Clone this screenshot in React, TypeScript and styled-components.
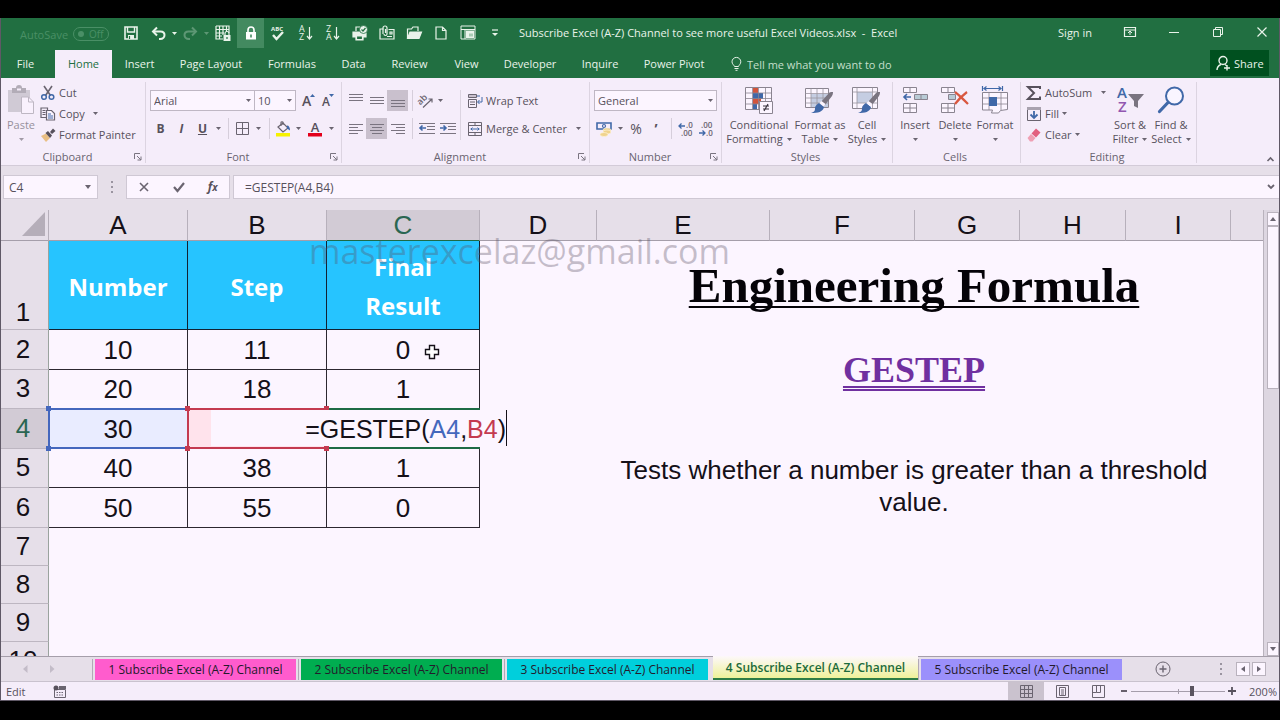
import React from "react";
import styled, { createGlobalStyle, css } from "styled-components";

const UI = `"Open Sans", "Noto Sans", sans-serif`;
const ARIAL = `"Liberation Sans", Arial, sans-serif`;
const SERIF = `"Liberation Serif", "Times New Roman", serif`;

const c = {
  green: "#216f41",
  greenDark: "#00501f",
  ribbon: "#f5edfa",
  chrome: "#e6dfe9",
  sheet: "#fcf5ff",
  line: "#b9b2bd",
  ink: "#57515c",
  blue: "#4068a8",
  cyan: "#26c4ff",
  refBlue: "#4467bd",
  refRed: "#c43a50",
};

const Global = createGlobalStyle`
  * { box-sizing: border-box; }
  body { margin: 0; background: #000; font-family: ${UI}; font-size: 11px; color: ${c.ink}; }
  button, input, select { font: inherit; color: inherit; margin: 0; padding: 0; border: 0; background: none; border-radius: 0; }
  svg { display: block; flex: none; overflow: visible; }
`;

const Page = styled.div`
  height: 100vh;
  padding: 18px 0 19px;
  background: #000;
`;
const Window = styled.div`
  height: 100%;
  display: flex;
  flex-direction: column;
  border: solid #5f5866;
  border-width: 0 1px 1px;
  background: ${c.chrome};
  overflow: hidden;
`;

/* ---------- title bar ---------- */
const TitleBar = styled.header`
  flex: none;
  height: 32px;
  display: flex;
  align-items: stretch;
  background: ${c.green};
  color: #e9f3ea;
`;
const AutoSave = styled.label`
  display: flex;
  align-items: center;
  gap: 5px;
  width: 116px;
  padding-left: 19px;
  white-space: nowrap;
  color: #4a8f66;
`;
const Toggle = styled.button`
  display: flex;
  align-items: center;
  gap: 5px;
  width: 36px;
  height: 14px;
  padding-left: 4px;
  border: 1px solid #4a8f66;
  border-radius: 7px;
  font-size: 10px;
  line-height: 12px;
  &::before {
    content: "";
    width: 6px;
    height: 6px;
    border-radius: 50%;
    background: #4a8f66;
  }
`;
const QuickButton = styled.button<{ $w?: number; $on?: boolean; $faded?: boolean }>`
  flex: none;
  width: ${(p) => p.$w ?? 27}px;
  height: 30px;
  display: flex;
  align-items: center;
  justify-content: center;
  background: ${(p) => (p.$on ? "#438a60" : "none")};
  opacity: ${(p) => (p.$faded ? 0.3 : 1)};
`;
const Title = styled.div`
  flex: 1;
  padding-left: 11px;
  line-height: 29px;
  white-space: nowrap;
`;
const WindowTools = styled.div`
  display: flex;
  align-items: center;
  gap: 32px;
  height: 28px;
  padding-right: 11px;
`;
const PlainButton = styled.button`
  display: flex;
  align-items: center;
  white-space: nowrap;
`;

/* ---------- ribbon tabs ---------- */
const TabBar = styled.nav`
  flex: none;
  height: 28px;
  display: flex;
  background: ${c.green};
  color: #e9f3ea;
`;
const RibbonTab = styled.button<{ $w: number; $active?: boolean }>`
  flex: none;
  width: ${(p) => p.$w}px;
  line-height: 28px;
  text-align: center;
  white-space: nowrap;
  ${(p) =>
    p.$active &&
    css`
      margin-left: 5px;
      background: ${c.ribbon};
      color: ${c.green};
    `}
`;
const TellMe = styled.label`
  flex: 1;
  display: flex;
  align-items: center;
  gap: 5px;
  padding-left: 15px;
  input { width: 160px; outline: 0; }
  input::placeholder { color: #c4dfcb; opacity: 1; }
`;
const Share = styled.button`
  display: flex;
  align-items: center;
  gap: 3px;
  width: 59px;
  height: 26px;
  margin-right: 10px;
  padding-left: 6px;
  background: ${c.greenDark};
`;

/* ---------- ribbon ---------- */
const Ribbon = styled.section`
  flex: none;
  display: flex;
  height: 88px;
  padding: 4px 0 2px;
  background: ${c.ribbon};
  border-bottom: 1px solid #d3cbd8;
`;
const Group = styled.div<{ $w: number }>`
  flex: none;
  width: ${(p) => p.$w}px;
  display: flex;
  flex-direction: column;
  border-right: 1px solid #dcd4e1;
`;
const GroupBody = styled.div<{ $pad?: number }>`
  display: flex;
  height: 69px;
  padding-left: ${(p) => p.$pad ?? 0}px;
`;
const GroupLabel = styled.div`
  display: flex;
  align-items: center;
  line-height: 12px;
  padding-right: 3px;
  color: #6a6470;
  span { flex: 1; text-align: center; }
`;
const Stack = styled.div<{ $w?: number }>`
  width: ${(p) => (p.$w ? p.$w + "px" : "auto")};
  display: flex;
  flex-direction: column;
`;
const SmallButton = styled.button`
  display: flex;
  align-items: center;
  gap: 3px;
  height: 21px;
  white-space: nowrap;
`;
const Split = styled.div`
  display: flex;
  align-items: center;
  gap: 6px;
`;
const Spread = styled.div`
  display: flex;
  align-items: center;
  justify-content: space-between;
`;
const Rows = styled.div`
  display: flex;
  flex-direction: column;
  gap: 7px;
  padding-top: 8px;
`;
const Row = styled.div`
  display: flex;
  align-items: center;
  height: 21px;
`;
const Tool = styled.button<{ $w?: number; $on?: boolean }>`
  flex: none;
  width: ${(p) => p.$w ?? 21}px;
  height: 21px;
  display: flex;
  align-items: center;
  justify-content: center;
  background: ${(p) => (p.$on ? "#c9c0cd" : "none")};
`;
const Glyph = styled.span<{ $bold?: boolean; $italic?: boolean; $under?: boolean; $size?: number }>`
  font-size: ${(p) => p.$size ?? 12}px;
  font-weight: ${(p) => (p.$bold ? 700 : 400)};
  font-style: ${(p) => (p.$italic ? "italic" : "normal")};
  text-decoration: ${(p) => (p.$under ? "underline" : "none")};
  line-height: 16px;
`;
const Sep = styled.i<{ $w: number }>`
  flex: none;
  width: ${(p) => p.$w}px;
  height: 21px;
  background: linear-gradient(#d6cedb, #d6cedb) center / 1px 100% no-repeat;
`;
const AlignLeft = styled(Rows)`
  width: 116px;
  margin-right: 6px;
  background: linear-gradient(#dcd4e1, #dcd4e1) right 8px / 1px 50px no-repeat;
`;
const AlignRight = styled(Rows)`
  flex: 1;
  padding-right: 5px;
`;
const Combo = styled.div<{ $w: number }>`
  position: relative;
  flex: none;
  width: ${(p) => p.$w}px;
  select {
    width: 100%;
    height: 21px;
    appearance: none;
    padding-left: 3px;
    border: 1px solid #bfb7c4;
    background: ${c.sheet};
    outline: 0;
  }
  & + & { margin-left: -1px; }
  svg { position: absolute; right: 4px; top: 9px; pointer-events: none; }
`;
const BigButton = styled.button<{ $w: number; $faded?: boolean }>`
  flex: none;
  width: ${(p) => p.$w}px;
  display: flex;
  flex-direction: column;
  align-items: center;
  padding-top: 4px;
  opacity: ${(p) => (p.$faded ? 0.6 : 1)};
`;
const BigIcon = styled.span`
  height: 32px;
`;
const BigLine = styled.span`
  display: flex;
  align-items: center;
  gap: 4px;
  height: 14px;
  line-height: 14px;
  white-space: nowrap;
`;
const RibbonEnd = styled.div`
  flex: 1;
  display: flex;
  align-items: flex-end;
  justify-content: flex-end;
  padding: 0 4px 0 0;
`;

/* ---------- formula bar ---------- */
const FormulaBar = styled.section`
  flex: none;
  display: flex;
  height: 44px;
  padding: 9px 0 11px 2px;
  font-size: 12px;
`;
const NameBox = styled.div`
  display: flex;
  align-items: center;
  width: 95px;
  padding: 0 6px 0 5px;
  border: 1px solid #cfc8d4;
  background: ${c.sheet};
  input { flex: 1; min-width: 0; outline: 0; }
`;
const Dots = styled.span<{ $w: number }>`
  width: ${(p) => p.$w}px;
  display: flex;
  align-items: center;
  justify-content: center;
`;
const FormulaButtons = styled.div`
  display: flex;
  align-items: center;
  justify-content: space-around;
  width: 104px;
  margin-right: 3px;
  border: 1px solid #cfc8d4;
  background: ${c.sheet};
`;
const FormulaField = styled.div`
  flex: 1;
  display: flex;
  align-items: center;
  padding: 0 4px 0 11px;
  border: 1px solid #cfc8d4;
  border-right: 0;
  background: ${c.sheet};
  input { flex: 1; min-width: 0; outline: 0; }
`;

/* ---------- sheet ---------- */
const Workspace = styled.main`
  position: relative;
  flex: 1;
  min-height: 0;
  display: flex;
`;
const GridClip = styled.div`
  flex: 1;
  min-width: 0;
  overflow: hidden;
  background: linear-gradient(${c.chrome} 31px, ${c.sheet} 31px);
  border-right: 1px solid ${c.line};
`;
const Grid = styled.table`
  width: 100%;
  table-layout: fixed;
  border-collapse: separate;
  border-spacing: 0;
  font-family: ${ARIAL};
  font-size: 26px;
  line-height: 30px;
  text-align: center;
  color: #151018;
`;
const SheetRow = styled.tr<{ $h: number }>`
  height: ${(p) => p.$h}px;
`;
const Blank = styled.td`
  padding: 0;
`;
const ColHead = styled.th<{ $on?: boolean }>`
  height: 31px;
  padding: 0;
  font-weight: 400;
  border-bottom: 1px solid ${(p) => (p.$on ? "#1d6b45" : "#a59eaa")};
  border-right: 1px solid #b7b0bb;
  background: ${(p) => (p.$on ? "#d2cbd5" : c.chrome)};
  color: ${(p) => (p.$on ? "#2a6652" : "inherit")};
  &:last-child { border-right: 0; }
`;
const Corner = styled(ColHead)`
  svg { margin: 0 3px 2px auto; }
`;
const RowHead = styled.th<{ $on?: boolean; $bottom?: boolean }>`
  padding: 0 3px 2px 0;
  font-weight: 400;
  border-right: 1px solid #9aa39e;
  border-bottom: 1px solid #bdb6c1;
  background: ${(p) => (p.$on ? "#d2cbd5" : c.chrome)};
  color: ${(p) => (p.$on ? "#2a6652" : "inherit")};
  vertical-align: ${(p) => (p.$bottom ? "bottom" : "middle")};
`;
const Head = styled.td`
  padding: 2px 0 0;
  border-right: 1px solid #123;
  border-bottom: 1px solid #123;
  background: ${c.cyan};
  color: #fff;
  font-family: ${UI};
  font-size: 24px;
  font-weight: 700;
  line-height: 39px;
`;
const Cell = styled.td`
  position: relative;
  padding: 0;
  border-right: 1px solid #2c2730;
  border-bottom: 1px solid #2c2730;
`;
const RefCell = styled(Cell)<{ $color: string; $tint: string }>`
  background: ${(p) => p.$tint};
  &::before {
    content: "";
    position: absolute;
    inset: -1px -2px -1px -1px;
    border: 2px solid ${(p) => p.$color};
    border-right: 0;
  }
`;
const ActiveCell = styled.td`
  position: relative;
  padding: 0;
  &::before {
    content: "";
    position: absolute;
    inset: -1px 0 0 0;
    border: solid #1d6b45;
    border-width: 2px 0;
  }
`;
const Handle = styled.i<{ $x: "left" | "right"; $y: "top" | "bottom"; $color: string }>`
  position: absolute;
  z-index: 2;
  width: 5px;
  height: 5px;
  background: ${(p) => p.$color};
  ${(p) => p.$x}: -3px;
  ${(p) => p.$y}: -3px;
`;
const Editor = styled.div`
  position: absolute;
  z-index: 3;
  right: -27px;
  top: 1px;
  width: 296px;
  height: 36px;
  line-height: 38px;
  font-size: 25px;
  text-align: right;
  white-space: nowrap;
  background: ${c.sheet};
  border-right: 1px solid #151018;
`;
const RefText = styled.span<{ $color: string }>`
  color: ${(p) => p.$color};
`;
const Pointer = styled.svg`
  position: absolute;
  left: 97px;
  top: 14px;
`;
const Heading = styled.h1`
  margin: 0;
  font: 700 49px/56px ${SERIF};
  color: #050308;
  text-decoration: underline 2px;
  text-underline-offset: 4px;
  text-decoration-skip-ink: none;
  white-space: nowrap;
`;
const SubHeading = styled.h2`
  margin: 0;
  font: 700 36px/40px ${SERIF};
  color: #7030a0;
  text-decoration: underline double 2px;
  text-underline-offset: 4px;
`;
const Description = styled.td`
  padding: 0 0 6px;
  line-height: 32px;
`;
const Watermark = styled.div`
  position: absolute;
  z-index: 4;
  left: 308px;
  top: 18px;
  font-size: 34px;
  line-height: 46px;
  color: rgba(90, 80, 100, 0.34);
  pointer-events: none;
`;

const VScroll = styled.div`
  flex: none;
  width: 15px;
  display: flex;
  flex-direction: column;
  padding: 2px 0 0 3px;
  background: #ddd6e1;
`;
const ScrollButton = styled.button`
  flex: none;
  width: 12px;
  height: 14px;
  display: flex;
  align-items: center;
  justify-content: center;
  border: 1px solid ${c.line};
  background: ${c.sheet};
`;
const VThumb = styled.div`
  flex: 0 0 163px;
  border: 1px solid ${c.line};
  background: ${c.sheet};
`;
const Fill = styled.div`
  flex: 1;
`;

/* ---------- sheet tabs and status ---------- */
const SheetBar = styled.nav`
  flex: none;
  display: flex;
  align-items: flex-start;
  height: 26px;
  border-top: 1px solid #a59eaa;
  border-bottom: 1px solid #c9c2ce;
`;
const SheetArrows = styled.div`
  display: flex;
  align-items: center;
  gap: 22px;
  width: 92px;
  height: 24px;
  padding-left: 22px;
`;
const SheetTab = styled.button<{ $bg: string; $active?: boolean }>`
  flex: none;
  width: 201px;
  height: 21px;
  margin: 2px 0 0 2px;
  box-shadow: -2px 0 0 ${c.chrome}, -3px 0 0 #b1a9b6;
  background: ${(p) => p.$bg};
  color: #241a2c;
  font-size: 12px;
  line-height: 20px;
  white-space: nowrap;
  & + & { margin-left: 5px; }
  ${(p) =>
    p.$active &&
    css`
      && { width: 205px; height: 24px; margin: -1px -2px 0 3px; }
      padding-top: 2px;
      border-bottom: 2px solid #2d7d46;
      box-shadow: none;
      color: #1d6b3c;
      font-weight: 600;
    `}
`;
const SheetEnd = styled.div`
  flex: 1;
  display: flex;
  align-items: center;
  height: 24px;
  margin-left: 3px;
  padding-right: 13px;
`;
const AddSheet = styled.button`
  width: 16px;
  height: 16px;
  margin-left: 30px;
  margin-right: auto;
`;
const HButton = styled(ScrollButton)`
  width: 14px;
  margin-left: 2px;
`;
const Status = styled.footer`
  flex: none;
  display: flex;
  align-items: center;
  height: 18px;
  padding-left: 5px;
  background: ${c.ribbon};
`;
const Mode = styled.span`
  width: 47px;
`;
const ViewButton = styled.button<{ $on?: boolean }>`
  width: 36px;
  height: 18px;
  display: flex;
  align-items: center;
  justify-content: center;
  background: ${(p) => (p.$on ? "#cac2ce" : "none")};
`;
const ZoomGroup = styled.div`
  display: flex;
  align-items: center;
  gap: 3px;
  margin-left: 5px;
`;
const Zoom = styled.input`
  width: 94px;
  height: 14px;
  appearance: none;
  background: linear-gradient(#a59dab, #a59dab) center / 100% 1px no-repeat,
    linear-gradient(#a59dab, #a59dab) 47px center / 1px 5px no-repeat;
  outline: 0;
  &::-webkit-slider-thumb {
    appearance: none;
    width: 4px;
    height: 10px;
    background: #5a5460;
  }
`;
const Percent = styled.span`
  width: 43px;
  padding-right: 2px;
  text-align: right;
`;

/* ---------- icons ---------- */
const Down = ({ color = "#6a6470" }: { color?: string }) => (
  <svg width="5" height="3" viewBox="0 0 5 3"><path d="M0 0h5L2.5 3z" fill={color} /></svg>
);
const Tri = ({ d }: { d: "up" | "down" | "left" | "right" }) => {
  const p = { up: "M0 5h6L3 1z", down: "M0 1h6L3 5z", left: "M5 0v6L1 3z", right: "M1 0v6l4-3z" }[d];
  return <svg width="6" height="6" viewBox="0 0 6 6"><path d={p} fill="#6a6470" /></svg>;
};
const W = (props: { children: React.ReactNode; w?: number; h?: number; s?: string }) => (
  <svg width={props.w ?? 16} height={props.h ?? 16} viewBox={`0 0 ${props.w ?? 16} ${props.h ?? 16}`} fill="none" stroke={props.s ?? "#e9f3ea"} strokeWidth="1.2">
    {props.children}
  </svg>
);
const Launcher = () => (
  <svg width="8" height="8" viewBox="0 0 8 8" fill="none" stroke="#7a7480"><path d="M.5 6V.5H6M3 3l4 4M7 3.5V7H3.5" /></svg>
);
const Save = () => (
  <W w={14} h={14}><path d="M1 1h12v12H1z" strokeWidth="1.6" /><path d="M3.5 1v5h7V1" strokeWidth="1.4" /><path d="M4 9h6v4H4z" fill="#e9f3ea" stroke="none" /><path d="M5.5 10v3" stroke={c.green} /></W>
);
const Undo = ({ flip }: { flip?: boolean }) => (
  <W w={15} h={13}><g transform={flip ? "translate(15 0) scale(-1 1)" : undefined}><path d="M2 4.5h7.5c2.5 0 4 1.5 4 3.500s-1.5 4-4.5 4H8" strokeWidth="2" /><path d="M6 .5L2 4.5l4 4" strokeWidth="2" /></g></W>
);
const GridLock = () => (
  <W><path d="M1 1h13v7M1 1v13h7M1 4.5h13M1 8h8M1 11h6M4.5 1v13M8 1v9M11.5 1v6" /><path d="M8.5 10h7v6h-7z" fill="#e9f3ea" stroke="none" /><path d="M10 10V8.500a2 2 0 014 0V10" /><path d="M12 12v2" stroke={c.green} /></W>
);
const Lock = () => (
  <W w={12} h={14}><path d="M1 6h10v7.5H1z" fill="#fff" stroke="none" /><path d="M3 6V4a3 3 0 016 0v2" stroke="#fff" strokeWidth="1.6" /><path d="M6 8.5v3" stroke="#438a60" strokeWidth="1.6" /></W>
);
const Spelling = () => (
  <W><text x="1" y="6" fontSize="6" fontWeight="700" fontFamily="Open Sans" fill="#e9f3ea" stroke="none">ABC</text><path d="M3 10l3.500 4L13 7" strokeWidth="2.4" /></W>
);
const SortIcon = ({ a, b }: { a: string; b: string }) => (
  <W><g fontSize="9" fontFamily="Open Sans" fill="#e9f3ea" stroke="none"><text x="1" y="7">{a}</text><text x="1" y="15">{b}</text></g><path d="M11.500 2v11M9 11l2.500 3 2.500-3" /></W>
);
const Printer = () => (
  <W><path d="M1 7h13v5H1z" fill="#e9f3ea" /><path d="M4 6V2h4M4 11v4h7v-4" /><path d="M4.5 11h6v3.500h-6z" fill={c.green} /><circle cx="11.5" cy="4.5" r="4" fill="#e9f3ea" stroke={c.green} strokeWidth=".8" /><path d="M9.5 4.500l1.500 1.500 2.500-3" stroke={c.green} /></W>
);
const Clip = () => (
  <W><path d="M4.500 4H1v10h14V4.500H9.500" /><path d="M4 9V3a2 2 0 014 0v6a1.500 1.500 0 01-3 0M6.500 4v4" /><path d="M11 7h2v2h-2zM8 11.500h5" /></W>
);
const Folder = () => (
  <W><path d="M1.5 13V4h4L7 2h5v4" /><path d="M1.5 13.500L4 7h11.500L13 13.500z" fill="#e9f3ea" /></W>
);
const NewFile = () => (
  <W w={12} h={14}><path d="M1 1h6.500L11 4.500V13H1zM7.500 1v3.500H11" /></W>
);
const Camera = () => (
  <W><path d="M1 1h14v13H1zM1 4.500h14M5 4.500V14" strokeWidth="1" /><path d="M6.500 6h7v6.500h-7z" fill="#e9f3ea" /><path d="M9 8.500h4v3H9z" fill="#a8cbb3" stroke="none" /></W>
);
const Customize = () => (
  <W w={6} h={8}><path d="M0 1h6" /><path d="M0 4h6L3 7z" fill="#e9f3ea" stroke="none" /></W>
);
const RibbonDisplay = () => (
  <W w={12} h={10}><path d="M.5.5h11v9H.5zM.5 3h11" /><path d="M6 8V4.500M4 6l2-2 2 2" strokeWidth="1" /></W>
);
const Minimize = () => <W w={12} h={10}><path d="M1 5.500h10" strokeWidth="1" /></W>;
const Restore = () => <W w={12} h={10}><path d="M1.5 2.500h7v7h-7zM3.500 2.500v-2h7v7h-2" strokeWidth="1" /></W>;
const Close = () => <W w={12} h={10}><path d="M1.500.500l9 9M10.500.500l-9 9" strokeWidth="1.200" /></W>;
const Bulb = () => (
  <W w={11} h={14}><path d="M3.500 9.500C3 8 1 7 1 4.800a4.400 4.400 0 018.800 0C9.800 7 8 8 7.500 9.500zM3.500 11.500h4M4.500 13.300h2" strokeWidth="1" /></W>
);
const Person = () => (
  <W w={15} h={16}><circle cx="7" cy="5.500" r="4" strokeWidth="1.400" /><path d="M1 15c0-3 1.500-4.500 4-5.500M9 9.500l2 1.500M11 10v5.500M8 13h6" strokeWidth="1.400" /></W>
);

const G = "#6a6470";
const Paste = () => (
  <svg width="28" height="28" viewBox="0 0 28 28"><path d="M1 4h22v22H1z" fill="#b9b3bd" /><path d="M5 2h4a3 3 0 016 0h4v5H5z" fill="#87818c" /><path d="M10 2.500h4v2h-4z" fill="#f5edfa" /><path d="M14.500 11h7l5 5v11.500h-12z" fill="#fcf5ff" stroke="#9a94a0" /><path d="M21.500 11v5h5" fill="none" stroke="#9a94a0" /></svg>
);
const Cut = () => (
  <W s={G}><path d="M4 1l6.500 9.500M12 1L5.500 10.500" strokeWidth="1.600" /><circle cx="4" cy="12" r="2.300" stroke={c.blue} strokeWidth="1.500" /><circle cx="11.500" cy="12" r="2.300" stroke={c.blue} strokeWidth="1.500" /></W>
);
const Copy = () => (
  <W s={G}><path d="M1 2h6.500v9.500H1zM2.500 4.500h3M2.500 6.500h3M2.500 8.500h3" /><path d="M6.500 4.500h5l3 3v6.500h-8z" fill={c.sheet} /><path d="M8 8h3M8 10h5M8 12h5" stroke={c.blue} /></W>
);
const Painter = () => (
  <W s="none"><path d="M1 9l5-2.500 4 4.500-4 4z" fill="#e9bf84" /><path d="M5.500 6L8 4l4 4.500L10 11z" fill="#57515c" /><path d="M10 5l3-3.500 2.500 2.500-3.500 3z" fill="#57515c" /></W>
);
const Borders = () => <W w={13} h={13} s={G}><path d="M.5.5h12v12H.5zM6.500.5v12M.5 6.500h12" strokeWidth="1" /></W>;
const Bucket = () => (
  <W s={G}><path d="M3 6l5-4 5 5-5 4z" /><path d="M6 5V1.500c0-1 2-1 2 0V4" /><path d="M12 4.500c2 0 3 2 3 5-1-1-2-1-3-2z" fill={c.blue} stroke="none" /><path d="M1 12h14v3.500H1z" fill="#f6f100" stroke="none" /></W>
);
const FontColor = () => (
  <W w={16} s="none"><text x="8" y="11" textAnchor="middle" fontSize="13" fontWeight="600" fontFamily="Open Sans" fill={c.ink}>A</text><path d="M1 12h14v3.500H1z" fill="#e3001b" /></W>
);
const GrowA = ({ up }: { up: boolean }) => (
  <W w={14} s="none"><text x="0" y="13" fontSize={up ? 14 : 12} fontWeight="600" fontFamily="Open Sans" fill={c.ink}>A</text><path d={up ? "M8 4h5l-2.500-3z" : "M7 1h5L9.500 4z"} fill={c.blue} /></W>
);
const Lines = ({ ys, xs }: { ys: number[]; xs: [number, number][] }) => (
  <W w={14} s="#7a7480">{ys.map((y, i) => <path key={y} d={`M${xs[i % xs.length][0]} ${y}.5H${xs[i % xs.length][1]}`} strokeWidth="1" />)}</W>
);
const Orientation = () => (
  <W s={G}><text x="0" y="11" fontSize="9" fontWeight="600" fontFamily="Open Sans" fill={G} stroke="none" transform="rotate(-45 3 9)">ab</text><path d="M5 14.500L14 6M10.500 6H14v3.500" /></W>
);
const Indent = ({ right }: { right?: boolean }) => (
  <W s="#7a7480"><path d="M0 2.500h16M8 5.500h8M8 8.500h8M0 12.500h16" strokeWidth="1" /><path d={right ? "M0 7h6M3.500 4.500L6 7 3.500 9.500" : "M1 7h6M3.500 4.500L1 7l2.500 2.500"} stroke={c.blue} strokeWidth="1.600" /></W>
);
const Wrap = () => (
  <W s={G}><path d="M1.500 1.500h8v3h-8z" fill="#c9c0cd" strokeWidth="1" /><path d="M1.500 6.500h8v8h-8zM3 9h5M3 11.500h5" strokeWidth="1" /><path d="M10 3h3M15 4v5h-4M12.500 7l-2 2 2 2" stroke={c.blue} strokeWidth="1" /></W>
);
const Merge = () => (
  <W s={G}><path d="M1.500 1.500h13v13h-13zM1.500 4.500h13M1.500 11.500h13M8 1.500v3M8 11.500v3" strokeWidth="1" /><path d="M3.500 8h9M5.500 6.500L4 8l1.500 1.500M10.500 6.500L12 8l-1.500 1.500" stroke={c.blue} strokeWidth="1" /></W>
);
const Currency = () => (
  <W s={c.blue}><path d="M1 2h14v6H1z" strokeWidth="1.600" /><circle cx="8" cy="5" r="1.500" /><g fill="#f0d38d" stroke="#fff7e2" strokeWidth=".6"><ellipse cx="11" cy="9" rx="4" ry="2" /><ellipse cx="11" cy="11" rx="4" ry="2" /><ellipse cx="8" cy="13.500" rx="4" ry="2" /></g></W>
);
const Decimal = ({ add }: { add?: boolean }) => (
  <W s="none"><g fontSize="8" fontFamily="Open Sans" fontWeight="600" fill={G}><text x={add ? 8 : 3} y="7">{add ? ".0" : ".00"}</text><text x={add ? 3 : 8} y="15">{add ? ".00" : ".0"}</text></g><path d={add ? "M1 5h6M3.500 2.500L1 5l2.500 2.500" : "M1 12h6M4.500 9.500L7 12l-2.500 2.500"} stroke={c.blue} strokeWidth="1.300" /></W>
);
const Conditional = () => (
  <svg width="30" height="28" viewBox="0 0 30 28"><path d="M1.500 1.500h26v22h-26z" fill="#fcf5ff" stroke="#8a8490" /><path d="M9 2h5v5H9zM9 13h8v5H9z" fill="#d2543c" /><path d="M9 7h10v6H9zM9 18h4v5H9z" fill={c.blue} /><path d="M1.500 7h26M1.500 12.500h26M1.500 18h26M8.500 1.500v22M14.500 1.500v22M21.500 1.500v22" stroke="#8a8490" fill="none" strokeWidth=".8" /><path d="M15.500 15.500h13v12h-13z" fill="#fcf5ff" stroke="#8a8490" /><path d="M19 20h6M19 23h6M24 18l-4 7" stroke="#38323c" strokeWidth="1.200" /></svg>
);
const Brush = ({ x }: { x: number }) => (
  <g transform={`translate(${x} 0)`}><path d="M20 7l-8 9 4 3 7-9c1-1.500 1-4 1-4s-3-.5-4 1z" fill="#7a7480" /><path d="M10 17l5 4c-1 5-6 6-13 6 4-1 4-3 4-5s2-4 4-5z" fill={c.blue} /><path d="M10.500 17l2-2 4 3-2 2.500z" fill="#fcf5ff" /></g>
);
const FormatTable = () => (
  <svg width="32" height="28" viewBox="0 0 32 28"><path d="M1.500 2.500h23v19h-23z" fill="#fcf5ff" stroke="#8a8490" /><path d="M7 8h17v13H7z" fill="#c5cde2" /><path d="M1.500 7.500h23M1.500 12h23M1.500 17h23M7 2.500v19M13 2.500v19M19 2.500v19" stroke="#9a94a0" strokeWidth=".8" /><Brush x={5} /></svg>
);
const CellStyles = () => (
  <svg width="32" height="28" viewBox="0 0 32 28"><path d="M1.500 1.500h25v21h-25z" fill="#fcf5ff" stroke="#8a8490" /><path d="M6 6h15v11H6z" fill="#c5cde2" /><path d="M1.500 6h25M1.500 17h25M6 1.500v21M21.500 1.500v21" stroke="#9a94a0" strokeWidth=".8" /><Brush x={5} /></svg>
);
const InsertCells = () => (
  <svg width="28" height="28" viewBox="0 0 28 28" fill="#fcf5ff" stroke="#8a8490"><path d="M2.500 1.500h13v5h-13zM9 1.500v5M2.500 17.500h13v9h-13zM9 17.500v9M2.500 22h13" /><path d="M13.500 8.500h13v5h-13zM20 8.500v5" fill="#b9cbd6" /><path d="M10 11H3M6 8l-3 3 3 3" fill="none" stroke={c.blue} strokeWidth="1.600" /></svg>
);
const DeleteCells = () => (
  <svg width="28" height="28" viewBox="0 0 28 28" fill="#fcf5ff" stroke="#8a8490"><path d="M.5 1.500h13v5H.5zM7 1.500v5M.5 17.500h13v9H.5zM7 17.500v9M.5 22h13" /><path d="M7.500 8.500h7v5h-7z" fill="#b9cbd6" /><path d="M14 6c4 3 9 8 13 12M26 6c-4 3-9 8-12 12" fill="none" stroke="#d9573f" strokeWidth="2.200" /></svg>
);
const FormatCells = () => (
  <svg width="28" height="28" viewBox="0 0 28 28" fill="#fcf5ff" stroke="#8a8490"><path d="M1.500 6.500h25v17l-7 1-2 2.500h-7l1-3h-10z" /><path d="M1.500 12h25M1.500 18h25M8 6.500V24M20 6.500V24" strokeWidth=".8" /><path d="M8 11h8v9H8z" fill={c.blue} stroke="none" /><path d="M1.500 0v5M21.500 0v5M3 2.500h17M5.500.5l-2.500 2 2.500 2M17.500.5l2.500 2-2.500 2" fill="none" stroke={c.blue} strokeWidth="1.200" /></svg>
);
const Sigma = () => <W s={c.ink}><path d="M14 4V2H2l6 6-6 6h12v-2.500" strokeWidth="2" /></W>;
const FillDown = () => <W s={G}><path d="M1.500 1.500h13v13h-13z" strokeWidth="1" /><path d="M1 1h14v3H1z" fill="#a9a2af" stroke="none" /><path d="M8 5v7M4.500 8.500L8 12l3.500-3.500" stroke={c.blue} strokeWidth="1.800" /></W>;
const Eraser = () => <W s="none"><path d="M1.500 11L5 7l4.500 4-3 3.500H4z" fill="#efa0b4" /><path d="M5.500 6.500L10 1.500l4.500 4-4.500 5z" fill="#e2607f" /></W>;
const SortFilter = () => (
  <svg width="30" height="28" viewBox="0 0 30 28"><g fontSize="15" fontWeight="600" fontFamily="Open Sans"><text x="2" y="12" fill={c.blue}>A</text><text x="3" y="26" fill="#9257b0">Z</text></g><path d="M13 8h16l-6 7v7l-4-2v-5z" fill="#7a7480" /></svg>
);
const Find = () => (
  <svg width="28" height="28" viewBox="0 0 28 28" fill="none"><circle cx="17.500" cy="10" r="8.500" fill="#f9f5ff" stroke={c.blue} strokeWidth="2" /><path d="M11 16.500L2.500 25.500" stroke={c.blue} strokeWidth="3.200" strokeLinecap="round" /></svg>
);
const DotColumn = () => <svg width="2" height="12" viewBox="0 0 2 12" fill="#9a94a0"><path d="M0 0h2v2H0zM0 5h2v2H0zM0 10h2v2H0z" /></svg>;

const ribbonTabs: [string, number][] = [
  ["File", 49], ["Home", 57], ["Insert", 55], ["Page Layout", 88], ["Formulas", 74], ["Data", 49],
  ["Review", 63], ["View", 51], ["Developer", 76], ["Inquire", 64], ["Power Pivot", 84],
];
const columns: [string, number | undefined][] = [
  ["A", 139], ["B", 139], ["C", 153], ["D", 117], ["E", 173], ["F", 145], ["G", 105], ["H", 106], ["I", 105], ["", undefined],
];
const sheets = [
  ["1", "#ff5ccd"], ["2", "#00ad50"], ["3", "#00cfdc"], ["4", "linear-gradient(#fdf8fb, #eef29a)"], ["5", "#9b90fb"],
];

const Big = ({ w, icon, a, b, faded }: { w: number; icon: React.ReactNode; a: string; b?: string; faded?: boolean }) => (
  <BigButton $w={w} $faded={faded}>
    <BigIcon>{icon}</BigIcon>
    <BigLine>{a}</BigLine>
    <BigLine>{b}<Down /></BigLine>
  </BigButton>
);

export default function App() {
  return (
    <Page>
      <Global />
      <Window>
        <TitleBar>
          <AutoSave>AutoSave<Toggle aria-label="AutoSave">Off</Toggle></AutoSave>
          <QuickButton $w={28} aria-label="Save"><Save /></QuickButton>
          <QuickButton $w={26} aria-label="Undo"><Undo /></QuickButton>
          <QuickButton $w={6} aria-label="Undo history"><Down color="#e9f3ea" /></QuickButton>
          <QuickButton $w={26} $faded aria-label="Redo"><Undo flip /></QuickButton>
          <QuickButton $w={6} $faded aria-label="Redo history"><Down color="#e9f3ea" /></QuickButton>
          <QuickButton $w={28} aria-label="Protect sheet"><GridLock /></QuickButton>
          <QuickButton $on aria-label="Lock cell"><Lock /></QuickButton>
          <QuickButton $w={28} aria-label="Spelling"><Spelling /></QuickButton>
          <QuickButton aria-label="Sort ascending"><SortIcon a="A" b="Z" /></QuickButton>
          <QuickButton aria-label="Sort descending"><SortIcon a="Z" b="A" /></QuickButton>
          <QuickButton aria-label="Print preview"><Printer /></QuickButton>
          <QuickButton aria-label="Email"><Clip /></QuickButton>
          <QuickButton aria-label="Open"><Folder /></QuickButton>
          <QuickButton aria-label="New"><NewFile /></QuickButton>
          <QuickButton $w={28} aria-label="Form"><Camera /></QuickButton>
          <QuickButton $w={26} aria-label="Customize toolbar"><Customize /></QuickButton>
          <Title>Subscribe Excel (A-Z) Channel to see more useful Excel Videos.xlsx&nbsp; -&nbsp; Excel</Title>
          <WindowTools>
            <PlainButton>Sign in</PlainButton>
            <PlainButton aria-label="Ribbon display options"><RibbonDisplay /></PlainButton>
            <PlainButton aria-label="Minimize"><Minimize /></PlainButton>
            <PlainButton aria-label="Restore"><Restore /></PlainButton>
            <PlainButton aria-label="Close"><Close /></PlainButton>
          </WindowTools>
        </TitleBar>

        <TabBar>
          {ribbonTabs.map(([name, w]) => (
            <RibbonTab key={name} $w={w} $active={name === "Home"}>{name}</RibbonTab>
          ))}
          <TellMe><Bulb /><input aria-label="Tell me" placeholder="Tell me what you want to do" /></TellMe>
          <Share><Person />Share</Share>
        </TabBar>

        <Ribbon>
          <Group $w={145}>
            <GroupBody $pad={1}>
              <Big w={38} icon={<Paste />} a="Paste" faded />
              <Stack $w={100}>
                <SmallButton><Cut />Cut</SmallButton>
                <Split>
                  <SmallButton><Copy />Copy</SmallButton>
                  <Tool $w={10} aria-label="Copy options"><Down /></Tool>
                </Split>
                <SmallButton><Painter />Format Painter</SmallButton>
              </Stack>
            </GroupBody>
            <GroupLabel><span>Clipboard</span><Launcher /></GroupLabel>
          </Group>

          <Group $w={196}>
            <GroupBody $pad={4}>
              <Rows>
                <Row>
                  <Combo $w={105}><select aria-label="Font"><option>Arial</option></select><Down /></Combo>
                  <Combo $w={42}><select aria-label="Font size"><option>10</option></select><Down /></Combo>
                  <Tool $w={26} aria-label="Increase font size"><GrowA up /></Tool>
                  <Tool $w={14} aria-label="Decrease font size"><GrowA up={false} /></Tool>
                </Row>
                <Row>
                  <Tool><Glyph $bold>B</Glyph></Tool>
                  <Tool><Glyph $bold $italic>I</Glyph></Tool>
                  <Tool><Glyph $bold $under>U</Glyph></Tool>
                  <Tool $w={10} aria-label="Underline style"><Down /></Tool>
                  <Sep $w={10} />
                  <Tool $w={18} aria-label="Borders"><Borders /></Tool>
                  <Tool $w={14} aria-label="Border style"><Down /></Tool>
                  <Sep $w={8} />
                  <Tool $w={20} aria-label="Fill color"><Bucket /></Tool>
                  <Tool $w={10} aria-label="Fill palette"><Down /></Tool>
                  <Tool $w={24} aria-label="Font color"><FontColor /></Tool>
                  <Tool $w={8} aria-label="Font palette"><Down /></Tool>
                </Row>
              </Rows>
            </GroupBody>
            <GroupLabel><span>Font</span><Launcher /></GroupLabel>
          </Group>

          <Group $w={248}>
            <GroupBody $pad={3}>
              <AlignLeft>
                <Row>
                  <Tool aria-label="Top align"><Lines ys={[1, 4, 7]} xs={[[0, 14]]} /></Tool>
                  <Tool aria-label="Middle align"><Lines ys={[4, 7, 10]} xs={[[0, 14]]} /></Tool>
                  <Tool $on aria-label="Bottom align"><Lines ys={[7, 10, 13]} xs={[[0, 14]]} /></Tool>
                  <Sep $w={8} />
                  <Tool $w={20} aria-label="Orientation"><Orientation /></Tool>
                  <Tool $w={9} aria-label="Orientation options"><Down /></Tool>
                </Row>
                <Row>
                  <Tool aria-label="Align left"><Lines ys={[3, 6, 9, 12]} xs={[[0, 14], [0, 9]]} /></Tool>
                  <Tool $on aria-label="Center"><Lines ys={[3, 6, 9, 12]} xs={[[0, 14], [2, 12]]} /></Tool>
                  <Tool aria-label="Align right"><Lines ys={[3, 6, 9, 12]} xs={[[0, 14], [5, 14]]} /></Tool>
                  <Sep $w={8} />
                  <Tool aria-label="Decrease indent"><Indent /></Tool>
                  <Tool aria-label="Increase indent"><Indent right /></Tool>
                </Row>
              </AlignLeft>
              <AlignRight>
                <SmallButton><Wrap />Wrap Text</SmallButton>
                <Spread>
                  <SmallButton><Merge />Merge &amp; Center</SmallButton>
                  <Tool $w={12} aria-label="Merge options"><Down /></Tool>
                </Spread>
              </AlignRight>
            </GroupBody>
            <GroupLabel><span>Alignment</span><Launcher /></GroupLabel>
          </Group>

          <Group $w={132}>
            <GroupBody $pad={4}>
              <Rows>
                <Row><Combo $w={123}><select aria-label="Number format"><option>General</option></select><Down /></Combo></Row>
                <Row>
                  <Tool $w={20} aria-label="Accounting format"><Currency /></Tool>
                  <Tool $w={12} aria-label="Currency options"><Down /></Tool>
                  <Tool $w={20}><Glyph $size={14}>%</Glyph></Tool>
                  <Tool $w={20}><Glyph $bold $size={14}>’</Glyph></Tool>
                  <Sep $w={10} />
                  <Tool $w={20} aria-label="Increase decimal"><Decimal add /></Tool>
                  <Tool $w={20} aria-label="Decrease decimal"><Decimal /></Tool>
                </Row>
              </Rows>
            </GroupBody>
            <GroupLabel><span>Number</span><Launcher /></GroupLabel>
          </Group>

          <Group $w={171}>
            <GroupBody>
              <Big w={74} icon={<Conditional />} a="Conditional" b="Formatting" />
              <Big w={48} icon={<FormatTable />} a="Format as" b="Table" />
              <Big w={46} icon={<CellStyles />} a="Cell" b="Styles" />
            </GroupBody>
            <GroupLabel><span>Styles</span></GroupLabel>
          </Group>

          <Group $w={128}>
            <GroupBody $pad={2}>
              <Big w={40} icon={<InsertCells />} a="Insert" />
              <Big w={40} icon={<DeleteCells />} a="Delete" />
              <Big w={40} icon={<FormatCells />} a="Format" />
            </GroupBody>
            <GroupLabel><span>Cells</span></GroupLabel>
          </Group>

          <Group $w={176}>
            <GroupBody $pad={5}>
              <Stack $w={83}>
                <Spread>
                  <SmallButton><Sigma />AutoSum</SmallButton>
                  <Tool $w={12} aria-label="AutoSum options"><Down /></Tool>
                </Spread>
                <SmallButton><FillDown />Fill<Down /></SmallButton>
                <SmallButton><Eraser />Clear<Down /></SmallButton>
              </Stack>
              <Big w={42} icon={<SortFilter />} a="Sort &" b="Filter" />
              <Big w={40} icon={<Find />} a="Find &" b="Select" />
            </GroupBody>
            <GroupLabel><span>Editing</span></GroupLabel>
          </Group>

          <RibbonEnd>
            <PlainButton aria-label="Collapse ribbon">
              <W w={9} h={8} s={G}><path d="M1.5 6l3-3 3 3" strokeWidth="1.600" /></W>
            </PlainButton>
          </RibbonEnd>
        </Ribbon>

        <FormulaBar>
          <NameBox><input aria-label="Name box" defaultValue="C4" /><Tri d="down" /></NameBox>
          <Dots $w={28}><DotColumn /></Dots>
          <FormulaButtons>
            <PlainButton aria-label="Cancel"><W w={12} h={12} s={G}><path d="M2 2l8 8M10 2l-8 8" strokeWidth="1.600" /></W></PlainButton>
            <PlainButton aria-label="Enter"><W w={12} h={12} s={G}><path d="M1 6l3.500 4L11 2" strokeWidth="2.200" /></W></PlainButton>
            <PlainButton aria-label="Insert function"><Glyph $bold $italic $size={12}>f<small>x</small></Glyph></PlainButton>
          </FormulaButtons>
          <FormulaField>
            <input aria-label="Formula" defaultValue="=GESTEP(A4,B4)" />
            <W w={8} h={6} s={G}><path d="M1 1l3 3 3-3" strokeWidth="1.800" /></W>
          </FormulaField>
        </FormulaBar>

        <Workspace>
          <GridClip>
            <Grid>
              <colgroup>
                <col width={48} />
                {columns.map(([n, w]) => <col key={n} width={w} />)}
              </colgroup>
              <thead>
                <tr>
                  <Corner><svg width="23" height="24" viewBox="0 0 23 24"><path d="M23 0v24H0z" fill="#b5aeb9" /></svg></Corner>
                  {columns.map(([n]) => <ColHead key={n} $on={n === "C"}>{n}</ColHead>)}
                </tr>
              </thead>
              <tbody>
                <SheetRow $h={89}>
                  <RowHead $bottom>1</RowHead>
                  <Head>Number</Head><Head>Step</Head><Head>Final<br />Result</Head>
                  <Blank />
                  <Blank colSpan={5}><Heading>Engineering Formula</Heading></Blank>
                  <Blank />
                </SheetRow>
                <SheetRow $h={40}>
                  <RowHead>2</RowHead>
                  <Cell>10</Cell><Cell>11</Cell>
                  <Cell>
                    0
                    <Pointer width="16" height="16" viewBox="0 0 16 16"><path d="M5.500 1.500h5v4h4v5h-4v4h-5v-4h-4v-5h4z" fill="#fff" stroke="#151018" strokeWidth="1.400" /></Pointer>
                  </Cell>
                  <Blank />
                  <Blank colSpan={5} rowSpan={2}><SubHeading>GESTEP</SubHeading></Blank>
                </SheetRow>
                <SheetRow $h={39}>
                  <RowHead>3</RowHead>
                  <Cell>20</Cell><Cell>18</Cell><Cell>1</Cell>
                </SheetRow>
                <SheetRow $h={40}>
                  <RowHead $on>4</RowHead>
                  <RefCell $color={c.refBlue} $tint="#e9ecff">
                    30
                    <Handle $x="left" $y="top" $color={c.refBlue} /><Handle $x="left" $y="bottom" $color={c.refBlue} />
                  </RefCell>
                  <RefCell $color={c.refRed} $tint="#ffe3ec">
                    <Handle $x="left" $y="top" $color={c.refRed} /><Handle $x="left" $y="bottom" $color={c.refRed} />
                    <Handle $x="right" $y="top" $color={c.refRed} /><Handle $x="right" $y="bottom" $color={c.refRed} />
                  </RefCell>
                  <ActiveCell>
                    <Editor>
                      =GESTEP(<RefText $color={c.refBlue}>A4</RefText>,<RefText $color={c.refRed}>B4</RefText>)
                    </Editor>
                  </ActiveCell>
                </SheetRow>
                <SheetRow $h={39}>
                  <RowHead>5</RowHead>
                  <Cell>40</Cell><Cell>38</Cell><Cell>1</Cell>
                  <Blank />
                  <Description colSpan={5} rowSpan={2}>Tests whether a number is greater than a threshold value.</Description>
                </SheetRow>
                <SheetRow $h={40}>
                  <RowHead>6</RowHead>
                  <Cell>50</Cell><Cell>55</Cell><Cell>0</Cell>
                </SheetRow>
                {[7, 8, 9, 10].map((n) => (
                  <SheetRow key={n} $h={38}><RowHead>{n}</RowHead></SheetRow>
                ))}
              </tbody>
            </Grid>
          </GridClip>
          <Watermark>masterexcelaz@gmail.com</Watermark>
          <VScroll>
            <ScrollButton aria-label="Scroll up"><Tri d="up" /></ScrollButton>
            <VThumb />
            <Fill />
            <ScrollButton aria-label="Scroll down"><Tri d="down" /></ScrollButton>
          </VScroll>
        </Workspace>

        <SheetBar>
          <SheetArrows>
            <svg width="5" height="8" viewBox="0 0 5 8"><path d="M4.500 0v8L0 4z" fill="#c3bcc8" /></svg>
            <svg width="5" height="8" viewBox="0 0 5 8"><path d="M0 0v8l4.500-4z" fill="#c3bcc8" /></svg>
          </SheetArrows>
          {sheets.map(([n, bg]) => (
            <SheetTab key={n} $bg={bg} $active={n === "4"}>{n} Subscribe Excel (A-Z) Channel</SheetTab>
          ))}
          <SheetEnd>
            <AddSheet aria-label="New sheet"><W s={G}><circle cx="8" cy="8" r="7" strokeWidth="1" /><path d="M8 4.500v7M4.500 8h7" strokeWidth="1.400" /></W></AddSheet>
            <Dots $w={26}><DotColumn /></Dots>
            <HButton aria-label="Scroll left"><Tri d="left" /></HButton>
            <HButton aria-label="Scroll right"><Tri d="right" /></HButton>
          </SheetEnd>
        </SheetBar>

        <Status>
          <Mode>Edit</Mode>
          <W w={13} h={13} s={G}><path d="M1.500 4.500h11v8h-11z" strokeWidth="1" /><path d="M6 1h7v3H6z" fill={G} stroke="none" /><circle cx="3" cy="3" r="2.500" fill={c.ink} stroke="none" /><path d="M3.500 7.500h7M3.500 10h7" strokeDasharray="1.500 1" /></W>
          <Fill />
          <ViewButton $on aria-label="Normal view"><W w={13} h={13} s={G}><path d="M.5.5h12v12H.5zM.5 4.500h12M.5 8.500h12M4.500.5v12M8.500.5v12" strokeWidth="1" /></W></ViewButton>
          <ViewButton aria-label="Page layout view"><W w={13} h={13} s={G}><path d="M.5.5h12v12H.5zM3.500 2.500h6v8h-6zM5 5h3M5 7h3M5 9h3" strokeWidth="1" /></W></ViewButton>
          <ViewButton aria-label="Page break view"><W w={13} h={13} s={G}><path d="M.5.5h12v12H.5zM4.500.5v7h-4M8.500.5v7h-4" strokeWidth="1" /></W></ViewButton>
          <ZoomGroup>
            <PlainButton aria-label="Zoom out"><W w={7} h={8} s={c.ink}><path d="M0 4h6" strokeWidth="1.800" /></W></PlainButton>
            <Zoom type="range" aria-label="Zoom" min={0} max={100} defaultValue={65} />
            <PlainButton aria-label="Zoom in"><W w={8} h={8} s={c.ink}><path d="M0 4h8M4 0v8" strokeWidth="1.800" /></W></PlainButton>
          </ZoomGroup>
          <Percent>200%</Percent>
        </Status>
      </Window>
    </Page>
  );
}
